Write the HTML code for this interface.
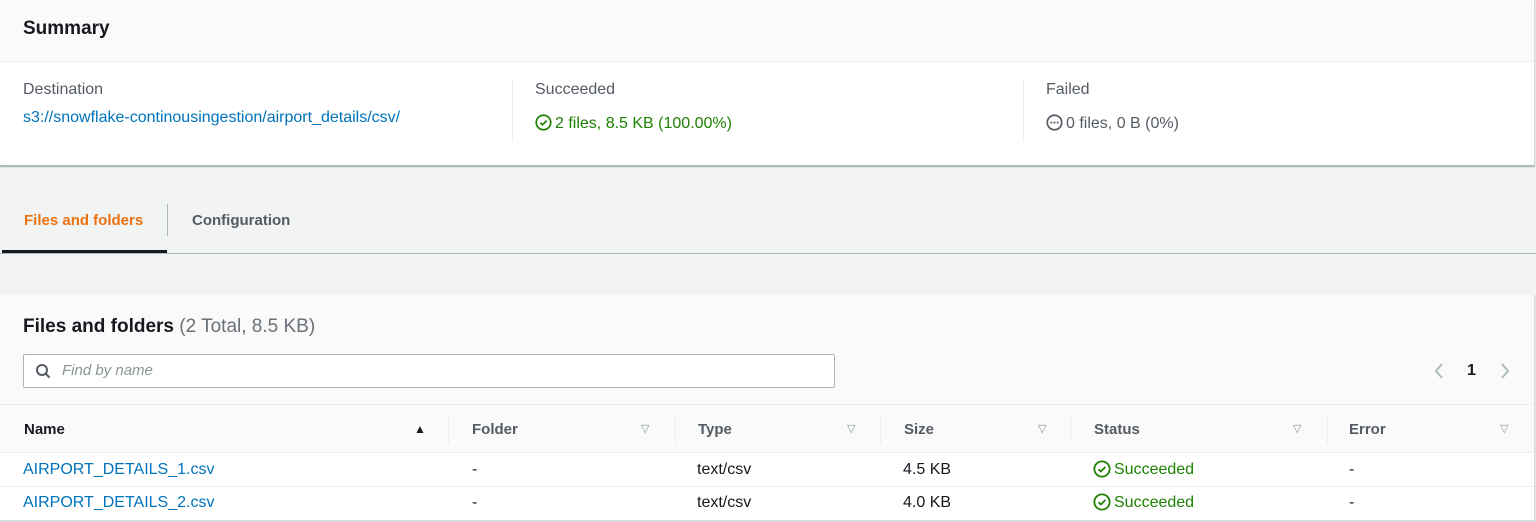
<!DOCTYPE html>
<html><head><style>
*{box-sizing:border-box;margin:0;padding:0}
body{width:1536px;height:522px;background:#f2f3f3;font-family:"Liberation Sans",sans-serif;font-size:16px;color:#16191f;position:relative;overflow:hidden}
.abs{position:absolute}
a{color:#0073bb;text-decoration:none}
.card1{left:0;top:0;width:1535px;height:166px;background:#fff;border-right:1px solid #d5dbdb;border-bottom:1px solid #aab7b8;box-shadow:0 1px 1px rgba(0,28,36,.3)}
.h1{left:0;top:0;width:100%;height:62px;background:#fafafa;border-bottom:1px solid #eaeded}
.lbl{color:#545b64}
.ok{color:#1d8102}
.th{font-weight:bold;color:#16191f;font-size:15px}
.sep{width:1px;background:#eaeded}
.tri{color:#879596;font-size:11px}
.fx{display:flex;align-items:center;gap:3px;line-height:18px}
.fx svg{display:block;flex:none;margin-top:-3px}
</style></head><body>
<div class="abs card1">
  <div class="abs h1"><div class="abs" style="left:23px;top:18px;font-size:19px;font-weight:bold">Summary</div></div>
  <div class="abs lbl" style="left:23px;top:81px">Destination</div>
  <div class="abs" style="left:23px;top:109px"><a>s3://snowflake-continousingestion/airport_details/csv/</a></div>
  <div class="abs sep" style="left:512px;top:80px;height:62px"></div>
  <div class="abs lbl" style="left:535px;top:81px">Succeeded</div>
  <div class="abs ok fx" style="left:535px;top:115px"><svg width="17" height="17" viewBox="0 0 16 16"><circle cx="8" cy="8" r="6.8" fill="none" stroke="#1d8102" stroke-width="1.6"/><path d="M5 8.2l2 2 4-4" fill="none" stroke="#1d8102" stroke-width="1.6"/></svg>2 files, 8.5 KB (100.00%)</div>
  <div class="abs sep" style="left:1023px;top:80px;height:62px"></div>
  <div class="abs lbl" style="left:1046px;top:81px">Failed</div>
  <div class="abs lbl fx" style="left:1046px;top:115px"><svg width="17" height="17" viewBox="0 0 16 16"><circle cx="8" cy="8" r="6.8" fill="none" stroke="#545b64" stroke-width="1.6"/><circle cx="5" cy="8" r="1" fill="#545b64"/><circle cx="8" cy="8" r="1" fill="#545b64"/><circle cx="11" cy="8" r="1" fill="#545b64"/></svg>0 files, 0 B (0%)</div>
</div>
<div class="abs" style="left:0;top:253px;width:1536px;height:1px;background:#aab7b8"></div>
<div class="abs" style="left:2px;top:250px;width:165px;height:3px;background:#16191f"></div>
<div class="abs" style="left:24px;top:212px;color:#ec7211;font-weight:bold;font-size:15px">Files and folders</div>
<div class="abs" style="left:167px;top:204px;width:1px;height:32px;background:#aab7b8"></div>
<div class="abs" style="left:192px;top:212px;color:#545b64;font-weight:bold;font-size:15px">Configuration</div>

<div class="abs" style="left:0;top:295px;width:1535px;height:227px;background:#fff;border-right:1px solid #d5dbdb;box-shadow:0 1px 1px rgba(0,28,36,.3)">
  <div class="abs" style="left:0;top:0;width:100%;height:110px;background:#fafafa;border-bottom:1px solid #eaeded"></div>
  <div class="abs" style="left:23px;top:21px;font-size:19px"><b>Files and folders</b> <span style="color:#687078">(2 Total, 8.5 KB)</span></div>
  <div class="abs" style="left:23px;top:59px;width:812px;height:34px;background:#fff;border:1px solid #aab7b8;border-radius:2px"></div>
  <svg class="abs" style="left:35px;top:68px" width="16" height="16" viewBox="0 0 16 16"><circle cx="7" cy="7" r="5" fill="none" stroke="#545b64" stroke-width="2"/><path d="M10.5 10.5l4 4" stroke="#545b64" stroke-width="2"/></svg>
  <div class="abs" style="left:62px;top:67px;color:#879596;font-style:italic;font-size:15px">Find by name</div>
  <svg class="abs" style="left:1433px;top:67px" width="12" height="18" viewBox="0 0 12 18"><path d="M9 2L3 9l6 7" fill="none" stroke="#aab7b8" stroke-width="1.8"/></svg>
  <div class="abs" style="left:1467px;top:67px;font-weight:bold">1</div>
  <svg class="abs" style="left:1499px;top:67px" width="12" height="18" viewBox="0 0 12 18"><path d="M3 2l6 7-6 7" fill="none" stroke="#aab7b8" stroke-width="1.8"/></svg>

  <div class="abs" style="left:0;top:110px;width:100%;height:48px;background:#fafafa;border-bottom:1px solid #eaeded"></div>
  <div class="abs th" style="left:24px;top:126px">Name</div><div class="abs" style="left:414px;top:127px;font-size:12px">&#9650;</div>
  <div class="abs sep" style="left:448px;top:120px;height:28px"></div>
  <div class="abs th" style="left:472px;top:126px;color:#545b64">Folder</div><div class="abs tri" style="left:641px;top:127px">&#9661;</div>
  <div class="abs sep" style="left:675px;top:120px;height:28px"></div>
  <div class="abs th" style="left:698px;top:126px;color:#545b64">Type</div><div class="abs tri" style="left:847px;top:127px">&#9661;</div>
  <div class="abs sep" style="left:880px;top:120px;height:28px"></div>
  <div class="abs th" style="left:904px;top:126px;color:#545b64">Size</div><div class="abs tri" style="left:1038px;top:127px">&#9661;</div>
  <div class="abs sep" style="left:1070px;top:120px;height:28px"></div>
  <div class="abs th" style="left:1094px;top:126px;color:#545b64">Status</div><div class="abs tri" style="left:1293px;top:127px">&#9661;</div>
  <div class="abs sep" style="left:1327px;top:120px;height:28px"></div>
  <div class="abs th" style="left:1349px;top:126px;color:#545b64">Error</div><div class="abs tri" style="left:1500px;top:127px">&#9661;</div>

  <div class="abs" style="left:0;top:191px;width:100%;height:1px;background:#eaeded"></div>
  <div class="abs" style="left:0;top:225px;width:100%;height:2px;background:#d5dbdb"></div>

  <div class="abs" style="left:23px;top:166px"><a>AIRPORT_DETAILS_1.csv</a></div>
  <div class="abs" style="left:472px;top:166px">-</div>
  <div class="abs" style="left:697px;top:166px">text/csv</div>
  <div class="abs" style="left:903px;top:166px">4.5 KB</div>
  <div class="abs ok fx" style="left:1093px;top:166px"><svg width="18" height="18" viewBox="0 0 16 16"><circle cx="8" cy="8" r="6.8" fill="none" stroke="#1d8102" stroke-width="1.6"/><path d="M5 8.2l2 2 4-4" fill="none" stroke="#1d8102" stroke-width="1.6"/></svg>Succeeded</div>
  <div class="abs" style="left:1349px;top:166px">-</div>

  <div class="abs" style="left:23px;top:199px"><a>AIRPORT_DETAILS_2.csv</a></div>
  <div class="abs" style="left:472px;top:199px">-</div>
  <div class="abs" style="left:697px;top:199px">text/csv</div>
  <div class="abs" style="left:903px;top:199px">4.0 KB</div>
  <div class="abs ok fx" style="left:1093px;top:199px"><svg width="18" height="18" viewBox="0 0 16 16"><circle cx="8" cy="8" r="6.8" fill="none" stroke="#1d8102" stroke-width="1.6"/><path d="M5 8.2l2 2 4-4" fill="none" stroke="#1d8102" stroke-width="1.6"/></svg>Succeeded</div>
  <div class="abs" style="left:1349px;top:199px">-</div>
</div>
</body></html>
